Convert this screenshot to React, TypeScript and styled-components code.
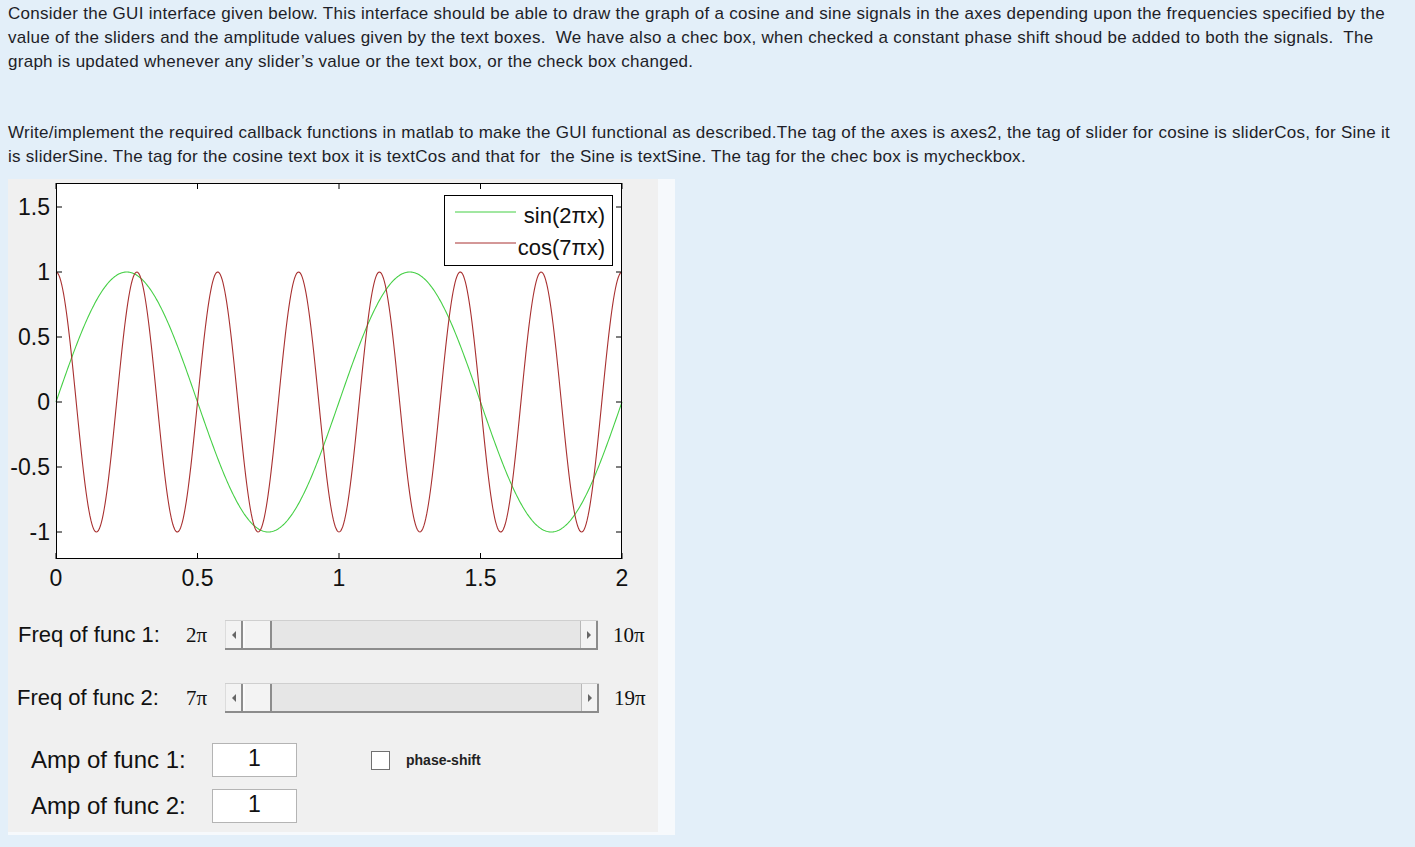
import styled, { createGlobalStyle } from "styled-components";

const GlobalStyle = createGlobalStyle`
	html, body {
		margin: 0;
		padding: 0;
		background: #e3eff9;
	}
	body {
		font-family: "Liberation Sans", Arial, sans-serif;
		color: #222;
	}
`;

const Page = styled.div`
	padding: 2px 8px 12px 8px;
`;

const Para = styled.p<{ gapBelow: number }>`
	margin: 0 0 ${props => props.gapBelow}px 0;
	font-size: 17px;
	letter-spacing: 0.27px;
	line-height: 24px;
	white-space: nowrap;
	color: #1e1e28;
`;

const Panel = styled.div`
	width: 650px;
	background: #f0f0f0;
	border-right: 17px solid #f6f9fc;
	border-bottom: 3px solid #f6f9fc;
	padding-bottom: 9px;
`;

const PlotSvg = styled.svg`
	display: block;
	font-family: "Liberation Sans", Arial, sans-serif;
`;

const Controls = styled.div`
	display: flex;
	flex-direction: column;
	margin-top: 26px;
`;

const FreqRow = styled.div<{ indent: number; gapBelow: number }>`
	display: flex;
	align-items: center;
	height: 30px;
	padding-left: ${props => props.indent}px;
	margin-bottom: ${props => props.gapBelow}px;
`;

const FreqLabel = styled.span<{ w: number }>`
	width: ${props => props.w}px;
	font-size: 22px;
	color: #111;
`;

const PiValue = styled.span`
	width: 39px;
	font-family: "Liberation Serif", "Times New Roman", serif;
	font-size: 21px;
	color: #111;
`;

const MaxValue = styled.span`
	margin-left: 15px;
	font-family: "Liberation Serif", "Times New Roman", serif;
	font-size: 21px;
	color: #111;
`;

const Slider = styled.div<{ w: number }>`
	display: flex;
	width: ${props => props.w}px;
	height: 30px;
	box-sizing: border-box;
	border-top: 1px solid #cfcfcf;
	border-bottom: 2px solid #8c8c8c;
	background: #e6e6e6;
`;

const ArrowBtn = styled.div<{ side: "left" | "right" }>`
	width: 18px;
	display: flex;
	align-items: center;
	justify-content: center;
	background: #f3f3f3;
	border-left: 1px solid ${props => (props.side === "left" ? "#dcdcdc" : "#b8b8b8")};
	border-right: 2px solid #8c8c8c;
	box-sizing: border-box;
	&::after {
		content: "";
		width: 0;
		height: 0;
		border-top: 4px solid transparent;
		border-bottom: 4px solid transparent;
		${props =>
			props.side === "left"
				? "border-right: 4px solid #666;"
				: "border-left: 4px solid #666;"}
	}
`;

const Thumb = styled.div`
	width: 29px;
	background: #f3f3f3;
	border-left: 2px solid #fafafa;
	border-right: 2px solid #8c8c8c;
	box-sizing: border-box;
`;

const Trough = styled.div`
	flex: 1;
	background: #e6e6e6;
`;

const AmpRow = styled.div<{ gapBelow: number }>`
	display: flex;
	align-items: center;
	padding-left: 23px;
	margin-bottom: ${props => props.gapBelow}px;
`;

const AmpLabel = styled.span`
	width: 181px;
	font-size: 24px;
	color: #111;
`;

const AmpInput = styled.div`
	width: 85px;
	height: 34px;
	box-sizing: border-box;
	background: #fff;
	border: 1px solid #b4b4b4;
	display: flex;
	align-items: center;
	justify-content: center;
	padding-bottom: 4px;
	font-size: 23px;
	color: #111;
`;

const CheckBox = styled.div`
	width: 19px;
	height: 19px;
	box-sizing: border-box;
	margin-left: 74px;
	background: #fff;
	border: 1px solid #707070;
`;

const CheckLabel = styled.span`
	margin-left: 16px;
	font-size: 14px;
	font-weight: bold;
	color: #222;
`;

// plot geometry (panel coordinates)
const L = 48, T = 4, R = 614, B = 380;
const X0 = 48, XS = 283;
const Y0 = 223, YS = 130;
const px = (x: number) => X0 + x * XS;
const py = (y: number) => Y0 - y * YS;

function curve(fn: (x: number) => number) {
	const pts: string[] = [];
	for (let i = 0; i <= 600; i++) {
		const x = (2 * i) / 600;
		pts.push(`${px(x).toFixed(2)},${py(fn(x)).toFixed(2)}`);
	}
	return pts.join(" ");
}

const yTicks = [1.5, 1, 0.5, 0, -0.5, -1];
const xTicks = [0, 0.5, 1, 1.5, 2];
const GREEN = "#45cf45";
const RED = "#a83030";

function Plot() {
	return (
		<PlotSvg width={650} height={415}>
			<rect x={L} y={T} width={R - L} height={B - T} fill="#fff" />
			<polyline points={curve(x => Math.sin(2 * Math.PI * x))} fill="none" stroke={GREEN} strokeWidth={1.1} />
			<polyline points={curve(x => Math.cos(7 * Math.PI * x))} fill="none" stroke={RED} strokeWidth={1.1} />
			{yTicks.map(v => (
				<g key={"y" + v}>
					<line x1={L} x2={L + 6} y1={py(v)} y2={py(v)} stroke="#000" />
					<line x1={R - 6} x2={R} y1={py(v)} y2={py(v)} stroke="#000" />
					<text x={42} y={py(v) + 8} fontSize={23} textAnchor="end" fill="#111">
						{v}
					</text>
				</g>
			))}
			{xTicks.map(v => (
				<g key={"x" + v}>
					<line x1={px(v)} x2={px(v)} y1={T} y2={T + 6} stroke="#000" />
					<line x1={px(v)} x2={px(v)} y1={B - 6} y2={B} stroke="#000" />
					<text x={px(v)} y={407} fontSize={23} textAnchor="middle" fill="#111">
						{v}
					</text>
				</g>
			))}
			<rect x={L + 0.5} y={T + 0.5} width={R - L - 1} height={B - T - 1} fill="none" stroke="#000" />
			<rect x={436.5} y={16.5} width={168} height={70} fill="#fff" stroke="#000" />
			<line x1={447} x2={508} y1={33} y2={33} stroke={GREEN} />
			<line x1={447} x2={508} y1={64} y2={64} stroke={RED} />
			<text x={597} y={44} fontSize={22} textAnchor="end" fill="#111">sin(2πx)</text>
			<text x={597} y={76} fontSize={22} textAnchor="end" fill="#111">cos(7πx)</text>
		</PlotSvg>
	);
}

function FreqSlider(props: { label: string; from: string; to: string; indent: number; w: number; gapBelow: number }) {
	const { label, from, to, indent, w, gapBelow } = props;
	return (
		<FreqRow indent={indent} gapBelow={gapBelow}>
			<FreqLabel w={178 - indent}>{label}</FreqLabel>
			<PiValue>{from}</PiValue>
			<Slider w={w}>
				<ArrowBtn side="left" />
				<Thumb />
				<Trough />
				<ArrowBtn side="right" />
			</Slider>
			<MaxValue>{to}</MaxValue>
		</FreqRow>
	);
}

export default function App() {
	return (
		<Page>
			<GlobalStyle />
			<Para gapBelow={47}>
				Consider the GUI interface given below. This interface should be able to draw the graph of a cosine and sine signals in the axes depending upon the frequencies specified by the
				<br />
				value of the sliders and the amplitude values given by the text boxes.&nbsp; We have also a chec box, when checked a constant phase shift shoud be added to both the signals.&nbsp; The
				<br />
				graph is updated whenever any slider’s value or the text box, or the check box changed.
			</Para>
			<Para gapBelow={10}>
				Write/implement the required callback functions in matlab to make the GUI functional as described.The tag of the axes is axes2, the tag of slider for cosine is sliderCos, for Sine it
				<br />
				is sliderSine. The tag for the cosine text box it is textCos and that for&nbsp; the Sine is textSine. The tag for the chec box is mycheckbox.
			</Para>
			<Panel>
				<Plot />
				<Controls>
					<FreqSlider label="Freq of func 1:" from="2π" to="10π" indent={10} w={373} gapBelow={33} />
					<FreqSlider label="Freq of func 2:" from="7π" to="19π" indent={9} w={374} gapBelow={30} />
					<AmpRow gapBelow={12}>
						<AmpLabel>Amp of func 1:</AmpLabel>
						<AmpInput>1</AmpInput>
						<CheckBox />
						<CheckLabel>phase-shift</CheckLabel>
					</AmpRow>
					<AmpRow gapBelow={0}>
						<AmpLabel>Amp of func 2:</AmpLabel>
						<AmpInput>1</AmpInput>
					</AmpRow>
				</Controls>
			</Panel>
		</Page>
	);
}
